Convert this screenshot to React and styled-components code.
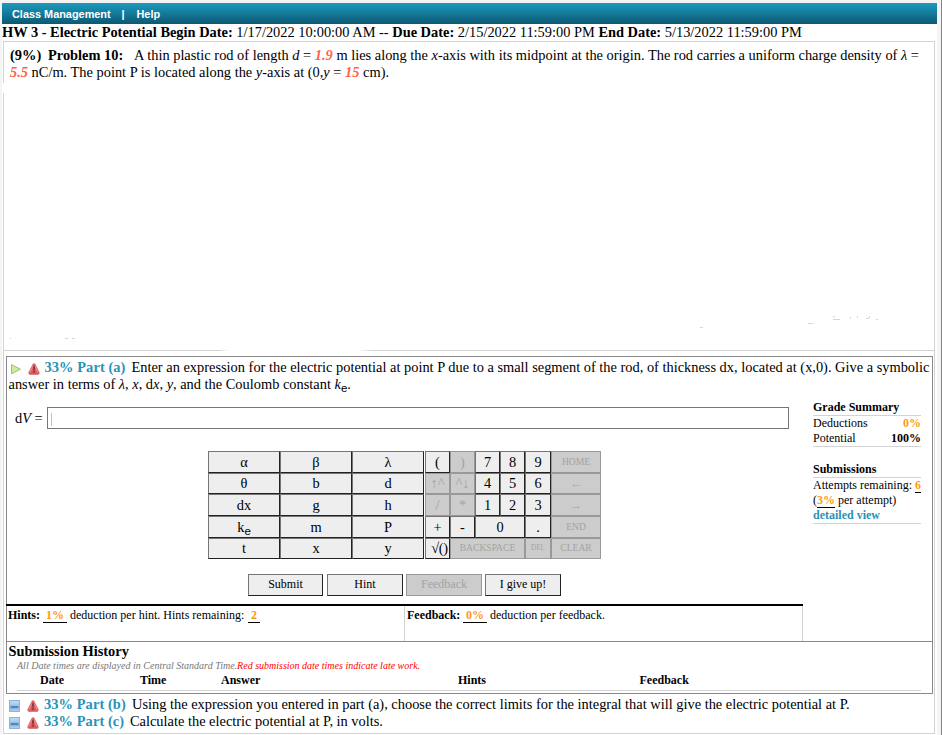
import React from "react";
import styled, { createGlobalStyle, css } from "styled-components";

const GlobalStyle = createGlobalStyle`
  * { box-sizing: border-box; }
  body {
    margin: 0;
    background: #f4f4f4;
    color: #000;
    font-family: "Liberation Serif", "Times New Roman", serif;
    overflow: hidden;
  }
`;

const Window = styled.div`
  display: flex;
  width: 942px;
  height: 735px;
  padding: 3px 4px 0 2px;
  border-right: 1px solid #858585;
`;

const Page = styled.main`
  display: flex;
  flex-direction: column;
  width: 935px;
  height: 732px;
  background: #fff;
  font-size: 14.4px;
  line-height: 17px;
`;

const MenuBar = styled.nav`
  display: flex;
  align-items: center;
  height: 21px;
  padding-left: 10px;
  background: linear-gradient(#1b9bbf, #0d5873);
  color: #fff;
  font: bold 10.9px/20px "Liberation Sans", Arial, sans-serif;
`;

const MenuItem = styled.span`
  width: ${(p) => p.$width}px;
  white-space: nowrap;
`;

const AssignmentTitle = styled.div`
  height: 17px;
  white-space: nowrap;
`;

const ProblemPanel = styled.section`
  display: flex;
  flex-direction: column;
  width: 932px;
  height: 693px;
  margin-left: 1px;
  border: 1px solid #d3d3d3;
  border-left: 0;
  background: linear-gradient(#d3d3d3 41px, #fff 41px, #fff 51px, #d3d3d3 51px) left / 1px 100% no-repeat;
`;

const Statement = styled.div`
  height: 308px;
  padding: 5px 0 0 7px;
  white-space: nowrap;
`;

const Divider = styled.div`
  height: 1px;
  background: linear-gradient(
    to right,
    #d3d3d3 0 215px,
    #fff 226px 355px,
    #d3d3d3 370px
  );
`;

const Lead = styled.b`
  display: inline-block;
  width: ${(p) => p.$width}px;
`;

const Value = styled.i`
  color: #ff6347;
  font-weight: bold;
`;

const Specks = styled.svg`
  display: block;
  width: 900px;
  height: 26px;
  margin-top: 234px;
`;

const PartPanel = styled.section`
  display: flex;
  flex-direction: column;
  width: 927px;
  height: 338px;
  margin: 5px 0 0 3px;
  border: 1px solid #888;
`;

const PartText = styled.div`
  height: 43px;
  padding: 2px 0 0 1.5px;
  white-space: nowrap;
`;

const PartLine = styled.div`
  display: flex;
  height: 17px;
  padding-left: ${(p) => p.$indent || 0}px;
  white-space: nowrap;
`;

const PlayIcon = styled.svg`
  width: 12px;
  height: 12px;
  margin: 4px 6px 0 0;
  flex: none;
`;

const AlertSvg = styled.svg`
  width: 12px;
  height: 12px;
  margin: 4px 5px 0 0;
  flex: none;
`;

const CollapseSvg = styled.svg`
  width: 11px;
  height: 12px;
  margin: 4px 7px 0 0;
  flex: none;
`;

const PartName = styled.b`
  width: ${(p) => p.$width}px;
  flex: none;
  color: #2693b8;
  letter-spacing: 0.09px;
`;

const Sub = styled.span`
  font-family: "Liberation Sans", Arial, sans-serif;
  font-size: 11.5px;
  position: relative;
  top: 3px;
  line-height: 0;
`;

const Work = styled.div`
  display: flex;
  height: 204px;
`;

const AnswerColumn = styled.div`
  display: flex;
  flex-direction: column;
  width: 796px;
`;

const AnswerRow = styled.label`
  display: flex;
  align-items: center;
  height: 22px;
  margin-top: 7px;
  padding-left: 8px;
`;

const AnswerLabel = styled.span`
  width: 32px;
  white-space: nowrap;
`;

const AnswerField = styled.div`
  width: 742px;
  height: 22px;
  padding: 5px 0 0 3px;
  border: 1px solid #777;
`;

const Caret = styled.div`
  width: 1px;
  height: 13px;
  background: #f5a9b0;
`;

const Keyboard = styled.div`
  display: flex;
  gap: 1px;
  margin: 22px 0 0 201px;
`;

const KeyGrid = styled.div`
  display: grid;
  grid-template-columns: ${(p) => p.$columns};
  grid-template-rows: 22px 21px 22px 22px 21px;
`;

const buttonFace = css`
  display: flex;
  align-items: center;
  justify-content: center;
  padding: 0;
  border: 1px solid;
  border-color: #767676 #222 #222 #767676;
  background: #eee;
  color: #000;
  font-family: inherit;
  white-space: nowrap;

  &:disabled {
    border-color: #999;
    background: #ccc;
    color: #a3a3a3;
  }
`;

const Key = styled.button`
  ${buttonFace}
  grid-column: span ${(p) => p.$span || 1};
  padding-bottom: 1px;
  padding-left: ${(p) => p.$nudge || 0}px;
  font-size: ${(p) => p.$size || 14.4}px;
  line-height: 18px;
  letter-spacing: ${(p) => p.$tracking || 0}px;
  overflow: hidden;
`;

const Actions = styled.div`
  display: flex;
  gap: 3px;
  margin: 15px 0 0 241px;
`;

const ActionButton = styled.button`
  ${buttonFace}
  width: ${(p) => p.$width}px;
  height: 22px;
  padding-bottom: 1px;
  font-size: 12px;

  &:first-child {
    margin-right: 1px;
  }
`;

const Side = styled.aside`
  display: flex;
  flex-direction: column;
  width: 108px;
  margin-left: 10px;
  font-size: 12px;
  line-height: 15px;
`;

const SideBlock = styled.div`
  margin-bottom: 15px;
  border-bottom: 1px solid #d3d3d3;
`;

const SideHeading = styled.div`
  height: 16px;
  border-bottom: 1px solid #d3d3d3;
  font-weight: bold;
`;

const SideRow = styled.div`
  display: flex;
  justify-content: space-between;
  height: 15px;
  white-space: pre;
`;

const Amber = styled.b`
  color: #ff9914;
`;

const UnderlinedAmber = styled(Amber)`
  height: 15px;
  border-bottom: 1px solid #000;
`;

const DetailLink = styled.b`
  color: #2693b8;
`;

const AidRow = styled.div`
  display: flex;
  width: 797px;
  height: 37px;
  margin-left: -1px;
  border-top: 2px solid #000;
`;

const AidCell = styled.div`
  display: flex;
  width: ${(p) => p.$width}px;
  padding: 2px 0 0 2px;
  border-right: 1px solid #d3d3d3;
  font-size: 12px;
  line-height: 15px;
  white-space: nowrap;
`;

const AidLabel = styled.b`
  width: ${(p) => p.$width}px;
`;

const AidText = styled.span`
  width: ${(p) => p.$width}px;
`;

const Blank = styled(Amber)`
  width: ${(p) => p.$width}px;
  height: 15px;
  margin-right: 3px;
  border-bottom: 1px solid #000;
  text-align: center;
`;

const History = styled.div`
  height: 52px;
  padding: 1px 11px 0 1.5px;
  border-top: 1px solid #888;
`;

const HistoryTitle = styled.div`
  height: 17px;
  font-weight: bold;
`;

const HistoryNote = styled.div`
  height: 12px;
  padding-left: 8.5px;
  color: #777;
  font-size: 10px;
  line-height: 12px;
  font-style: italic;
  white-space: nowrap;
`;

const LateNote = styled.span`
  color: #f00;
`;

const HistoryHead = styled.div`
  display: grid;
  grid-template-columns: 100px 81px 237px 181.5px 1fr;
  height: 19px;
  margin-left: 8.5px;
  padding: 1px 0 0 23px;
  border-bottom: 1px solid #d3d3d3;
  font-size: 12px;
  line-height: 15px;
  font-weight: bold;
`;

const OtherParts = styled.div`
  padding: 2px 0 0 6px;
`;

function AlertIcon() {
  return (
    <AlertSvg viewBox="0 0 12 12">
      <path d="M5 1.2Q6 0 7 1.2L11.2 9.5Q11.4 11.3 10.2 11.4H1.8Q.6 11.3 .8 9.5Z" fill="#e0595c" stroke="#cf6568" strokeWidth=".7" />
      <path d="M2 9.7 5.1 3M10 9.7 6.9 3" stroke="#f29a99" strokeWidth=".8" />
      <path d="M5.1 3.2H6.9L6.5 7.4H5.5Z" fill="#702e35" />
      <rect x="5.2" y="8.2" width="1.6" height="1.5" fill="#702e35" />
    </AlertSvg>
  );
}

function CollapseIcon() {
  return (
    <CollapseSvg viewBox="0 0 11 12">
      <defs>
        <linearGradient id="tile" x1="0" y1="0" x2="0" y2="1">
          <stop offset="0" stopColor="#c3dcf3" />
          <stop offset=".4" stopColor="#a5c8e9" />
          <stop offset=".6" stopColor="#79a8d6" />
          <stop offset="1" stopColor="#bdd8f0" />
        </linearGradient>
      </defs>
      <rect x=".5" y=".5" width="10" height="11" fill="url(#tile)" stroke="#8fb3d6" />
      <rect x="2" y="6" width="7" height="2" fill="#5287bb" />
    </CollapseSvg>
  );
}

const SYMBOLS = ["α", "β", "λ", "θ", "b", "d", "dx", "g", "h", "ke", "m", "P", "t", "x", "y"];

const KEYPAD = [
  { label: "(" }, { label: ")", off: true }, { label: "7" }, { label: "8" }, { label: "9" },
  { label: "HOME", off: true, size: 9.6 },
  { label: "↑^", off: true }, { label: "^↓", off: true }, { label: "4" }, { label: "5" }, { label: "6" },
  { label: "←", off: true, size: 11.5 },
  { label: "/", off: true }, { label: "*", off: true }, { label: "1" }, { label: "2" }, { label: "3" },
  { label: "→", off: true, size: 11.5 },
  { label: "+" }, { label: "-" }, { label: "0", span: 2 }, { label: "." },
  { label: "END", off: true, size: 9.6 },
  { label: "√()", nudge: 4, tracking: -0.4 }, { label: "BACKSPACE", off: true, size: 9.6, span: 3 },
  { label: "DEL", off: true, size: 7.2 }, { label: "CLEAR", off: true, size: 9.6 },
];

export default function App() {
  return (
    <Window>
      <GlobalStyle />
      <Page>
        <MenuBar>
          <MenuItem $width={109.5}>Class Management</MenuItem>
          <MenuItem $width={15}>|</MenuItem>
          <MenuItem $width={30}>Help</MenuItem>
        </MenuBar>
        <AssignmentTitle>
          <b>HW 3 - Electric Potential Begin Date:</b> 1/17/2022 10:00:00 AM -- <b>Due Date:</b>{" "}
          2/15/2022 11:59:00 PM <b>End Date:</b> 5/13/2022 11:59:00 PM
        </AssignmentTitle>
        <ProblemPanel>
          <Statement>
            <div>
              <Lead $width={38}>(9%)</Lead>
              <Lead $width={86}>Problem 10:</Lead>
              A thin plastic rod of length <i>d</i> = <Value>1.9</Value> m lies along the <i>x</i>-axis
              with its midpoint at the origin. The rod carries a uniform charge density of <i>λ</i> =
            </div>
            <div>
              <Value>5.5</Value> nC/m. The point P is located along the <i>y</i>-axis at (0,<i>y</i> ={" "}
              <Value>15</Value> cm).
            </div>
            <Specks viewBox="0 0 900 26">
              <g fill="#d4d4df">
                <rect x="0" y="23" width="1" height="1" />
                <rect x="55" y="23" width="3" height="1" />
                <rect x="62" y="23" width="3" height="1" />
                <rect x="690" y="12" width="3" height="1" />
                <rect x="798" y="8" width="5" height="1" />
                <rect x="823" y="1" width="2" height="1" />
                <rect x="823" y="4" width="7" height="1" />
                <rect x="840" y="2" width="1" height="2" />
                <rect x="847" y="1" width="1" height="2" />
                <rect x="856" y="3" width="3" height="1" />
                <rect x="859" y="1" width="1" height="2" />
                <rect x="866" y="4" width="2" height="1" />
              </g>
            </Specks>
          </Statement>
          <Divider />
          <PartPanel>
            <PartText>
              <PartLine $indent={1}>
                <PlayIcon viewBox="0 0 12 12">
                  <path d="M1.5 1.6V10.8L10.4 6.2Z" fill="#cfe8a2" stroke="#9cc465" strokeLinejoin="round" />
                </PlayIcon>
                <AlertIcon />
                <PartName $width={87}>33% Part (a)</PartName>
                <span>
                  Enter an expression for the electric potential at point P due to a small segment of
                  the rod, of thickness dx, located at (x,0). Give a symbolic
                </span>
              </PartLine>
              <div>
                answer in terms of <i>λ</i>, <i>x</i>, d<i>x</i>, <i>y</i>, and the Coulomb constant{" "}
                <i>k</i>
                <Sub>e</Sub>.
              </div>
            </PartText>
            <Work>
              <AnswerColumn>
                <AnswerRow>
                  <AnswerLabel>
                    d<i>V</i> =
                  </AnswerLabel>
                  <AnswerField>
                    <Caret />
                  </AnswerField>
                </AnswerRow>
                <Keyboard>
                  <KeyGrid $columns="repeat(3, 72px)">
                    {SYMBOLS.map((s) => (
                      <Key key={s}>
                        {s === "ke" ? (
                          <span>
                            k<Sub>e</Sub>
                          </span>
                        ) : (
                          s
                        )}
                      </Key>
                    ))}
                  </KeyGrid>
                  <KeyGrid $columns="25px 25px 25px 25px 26px 50px">
                    {KEYPAD.map((k) => (
                      <Key
                        key={k.label}
                        disabled={k.off}
                        $size={k.size}
                        $span={k.span}
                        $nudge={k.nudge}
                        $tracking={k.tracking}
                      >
                        {k.label}
                      </Key>
                    ))}
                  </KeyGrid>
                </Keyboard>
                <Actions>
                  <ActionButton $width={75}>Submit</ActionButton>
                  <ActionButton $width={76}>Hint</ActionButton>
                  <ActionButton $width={76} disabled>
                    Feedback
                  </ActionButton>
                  <ActionButton $width={76}>I give up!</ActionButton>
                </Actions>
              </AnswerColumn>
              <Side>
                <SideBlock>
                  <SideHeading>Grade Summary</SideHeading>
                  <SideRow>
                    <span>Deductions</span>
                    <Amber>0%</Amber>
                  </SideRow>
                  <SideRow>
                    <span>Potential</span>
                    <b>100%</b>
                  </SideRow>
                </SideBlock>
                <SideBlock>
                  <SideHeading>Submissions</SideHeading>
                  <SideRow>
                    <span>Attempts remaining: </span>
                    <UnderlinedAmber>6</UnderlinedAmber>
                  </SideRow>
                  <SideRow>
                    <span>(</span>
                    <UnderlinedAmber>3%</UnderlinedAmber>
                    <AidText $width={86}> per attempt)</AidText>
                  </SideRow>
                  <SideRow>
                    <DetailLink>detailed view</DetailLink>
                  </SideRow>
                </SideBlock>
              </Side>
            </Work>
            <AidRow>
              <AidCell $width={399}>
                <AidLabel $width={35}>Hints:</AidLabel>
                <Blank $width={24}>1%</Blank>
                <AidText $width={178}>deduction per hint. Hints remaining:</AidText>
                <Blank $width={12}>2</Blank>
              </AidCell>
              <AidCell $width={398}>
                <AidLabel $width={56}>Feedback:</AidLabel>
                <Blank $width={24}>0%</Blank>
                <span>deduction per feedback.</span>
              </AidCell>
            </AidRow>
            <History>
              <HistoryTitle>Submission History</HistoryTitle>
              <HistoryNote>
                All Date times are displayed in Central Standard Time.
                <LateNote>Red submission date times indicate late work.</LateNote>
              </HistoryNote>
              <HistoryHead>
                <span>Date</span>
                <span>Time</span>
                <span>Answer</span>
                <span>Hints</span>
                <span>Feedback</span>
              </HistoryHead>
            </History>
          </PartPanel>
          <OtherParts>
            <PartLine>
              <CollapseIcon />
              <AlertIcon />
              <PartName $width={88}>33% Part (b)</PartName>
              <span>
                Using the expression you entered in part (a), choose the correct limits for the
                integral that will give the electric potential at P.
              </span>
            </PartLine>
            <PartLine>
              <CollapseIcon />
              <AlertIcon />
              <PartName $width={86}>33% Part (c)</PartName>
              <span>Calculate the electric potential at P, in volts.</span>
            </PartLine>
          </OtherParts>
        </ProblemPanel>
      </Page>
    </Window>
  );
}
